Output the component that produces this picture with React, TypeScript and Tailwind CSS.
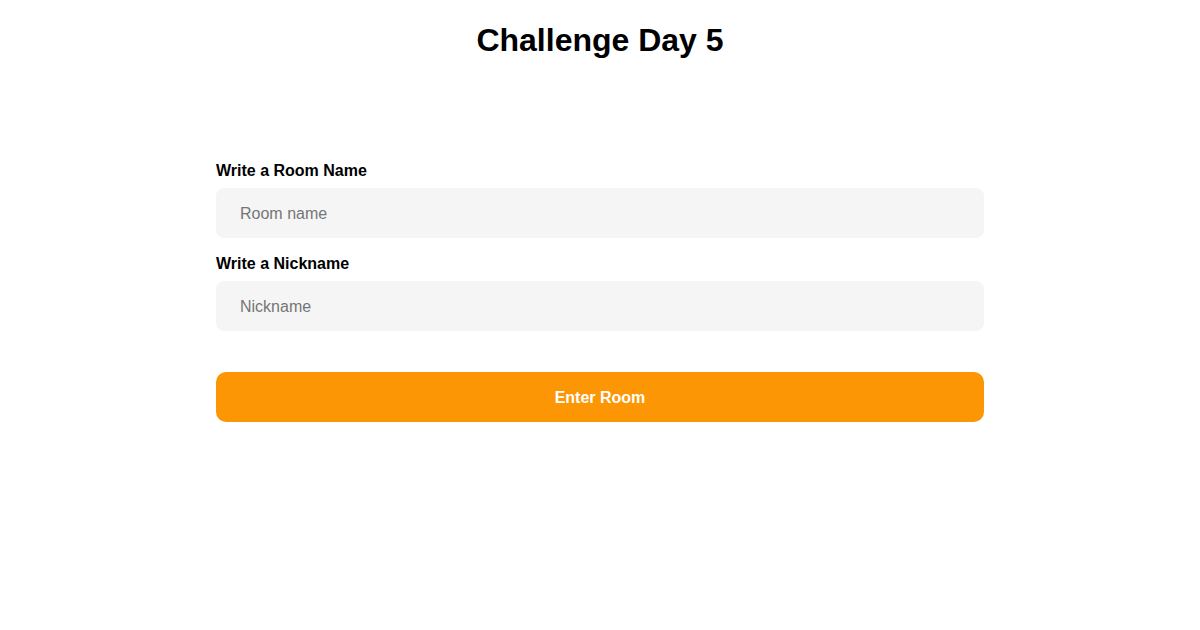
import React, { useState } from 'react';

const App: React.FC = () => {
  const [room, setRoom] = useState('');
  const [nickname, setNickname] = useState('');

  return (
    <div className="min-h-screen bg-white font-['Liberation_Sans',Arial,sans-serif] text-black">
      <h1 className="pt-[22px] text-center text-[32px] font-bold leading-[37px]">Challenge Day 5</h1>

      <form
        className="mx-auto mt-[102px] flex w-[768px] flex-col"
        onSubmit={(e) => e.preventDefault()}
      >
        <label htmlFor="room" className="text-base font-bold leading-[19px]">
          Write a Room Name
        </label>
        <input
          id="room"
          value={room}
          onChange={(e) => setRoom(e.target.value)}
          placeholder="Room name"
          className="mt-2 h-[50px] rounded-lg bg-[#f5f5f5] px-6 pt-px text-base outline-none placeholder:text-[#757575]"
        />

        <label htmlFor="nickname" className="mt-4 text-base font-bold leading-[19px]">
          Write a Nickname
        </label>
        <input
          id="nickname"
          value={nickname}
          onChange={(e) => setNickname(e.target.value)}
          placeholder="Nickname"
          className="mt-2 h-[50px] rounded-lg bg-[#f5f5f5] px-6 pt-px text-base outline-none placeholder:text-[#757575]"
        />

        <button
          type="submit"
          className="mt-[41px] h-[50px] rounded-[10px] bg-[#fc9605] pt-px text-base font-bold text-white"
        >
          Enter Room
        </button>
      </form>
    </div>
  );
};

export default App;
